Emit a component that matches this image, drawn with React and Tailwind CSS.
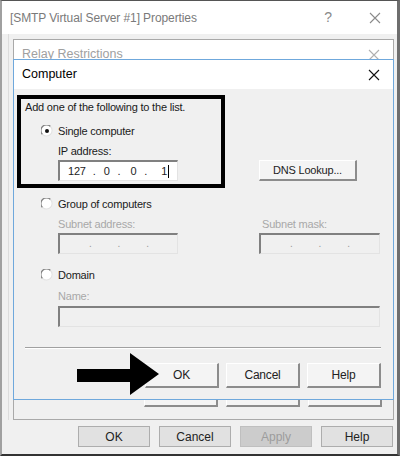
import React from 'react';

const sans = { fontFamily: '"Liberation Sans", Arial, sans-serif' };

const Radio = ({ checked }) => (
  <svg width="12" height="12" viewBox="0 0 12 12" className="shrink-0">
    <circle cx="6" cy="6" r="5.5" fill="#fff" />
    <path d="M1.5 9.5 A5.5 5.5 0 0 1 9.5 1.5" stroke="#808080" strokeWidth="1.2" fill="none" />
    <path d="M9.5 1.5 A5.5 5.5 0 0 1 1.5 9.5" stroke="#e3e3e3" strokeWidth="1.2" fill="none" />
    {checked && <circle cx="6" cy="6" r="2" fill="#111" />}
  </svg>
);

const XIcon = ({ color = '#222' }) => (
  <svg width="12" height="12" viewBox="0 0 12 12">
    <path d="M1 1 L11 11 M11 1 L1 11" stroke={color} strokeWidth="1.1" />
  </svg>
);

const Field = ({ className = '', children, white }) => (
  <div
    className={`h-[21px] border-t-2 border-l-2 border-b border-r border-t-[#808080] border-l-[#808080] border-b-[#e3e3e3] border-r-[#e3e3e3] ${white ? 'bg-white' : 'bg-[#f0f0f0]'} ${className}`}
  >
    {children}
  </div>
);

const ClassicBtn = ({ children, className = '' }) => (
  <div
    className={`flex items-center justify-center h-[25px] w-[74px] bg-[#f4f4f4] border-t border-l border-t-white border-l-white border-b-2 border-r-2 border-b-[#8c8c8c] border-r-[#8c8c8c] text-[12px] text-[#222] ${className}`}
  >
    {children}
  </div>
);

const Dots = () => (
  <div className="flex items-center h-full pl-[29px] gap-[26px] text-[10px] text-[#9a9a9a]">
    <span>.</span><span>.</span><span>.</span>
  </div>
);

export default function App() {
  return (
    <div className="relative w-[400px] h-[456px] overflow-hidden bg-[#f0f0f0]" style={sans}>
      {/* outer window */}
      <div className="absolute inset-0 border-l-2 border-r-[3px] border-t border-b-2 border-l-[#a0a0a0] border-r-[#6e6e6e] border-t-[#555] border-b-[#333]">
        <div className="h-[33px] bg-white flex items-center pl-[8px] text-[12px] tracking-[-0.1px] text-[#7a7a7a]">
          <span className="flex-1">[SMTP Virtual Server #1] Properties</span>
          <span className="w-[46px] text-center text-[14px] text-[#8a8a8a]">?</span>
          <span className="w-[46px] flex justify-center pl-[2px]"><XIcon color="#8a8a8a" /></span>
        </div>
        <div className="absolute left-[6px] top-[33px] bottom-[34px] w-px bg-[#dcdcdc]" />
        <div className="absolute right-[0px] bottom-[7px] flex gap-[9px] pr-[4px]">
          {['OK', 'Cancel'].map((t) => (
            <div key={t} className="w-[72px] h-[21px] bg-[#e1e1e1] border border-[#adadad] flex items-center justify-center text-[12px] text-[#222]">{t}</div>
          ))}
          <div className="w-[72px] h-[21px] bg-[#cccccc] border border-[#bfbfbf] flex items-center justify-center text-[12px] text-[#9c9c9c]">Apply</div>
          <div className="w-[72px] h-[21px] bg-[#e1e1e1] border border-[#adadad] flex items-center justify-center text-[12px] text-[#222]">Help</div>
        </div>
      </div>

      {/* relay restrictions window (behind) */}
      <div className="absolute left-[13px] top-[39px] w-[381px] h-[381px] border border-[#a9a9a9] bg-[#f0f0f0]">
        <div className="h-[29px] bg-white flex items-center pl-[8px] text-[12.5px] text-[#a0a0a0]">
          <span className="flex-1">Relay Restrictions</span>
          <span className="w-[38px] flex justify-center"><XIcon color="#b0b0b0" /></span>
        </div>
        <div className="absolute right-[11px] bottom-[12px] flex gap-[8px]">
          <ClassicBtn />
          <ClassicBtn />
          <ClassicBtn />
        </div>
      </div>

      {/* computer dialog */}
      <div className="absolute left-[13px] top-[59px] w-[381px] h-[341px] border border-[#6fa8dc] bg-[#f0f0f0] flex flex-col">
        <div className="h-[29px] shrink-0 bg-white flex items-center pl-[8px] text-[12.5px] text-black">
          <span className="flex-1">Computer</span>
          <span className="w-[38px] flex justify-center"><XIcon color="#111" /></span>
        </div>
        <div className="flex-1 flex flex-col pl-[11px] pr-[12px] pt-[11px] text-[11px] leading-[14px] text-[#1a1a1a] tracking-[-0.2px]">
          <div className="h-[14px]">Add one of the following to the list.</div>

          <div className="flex items-center gap-[5px] mt-[10px] pl-[16px] h-[14px]">
            <Radio checked />
            <span>Single computer</span>
          </div>
          <div className="pl-[33px] mt-[6px] h-[14px]">IP address:</div>
          <div className="flex items-center pl-[33px] mt-[2px]">
            <Field white className="w-[120px]">
              <div className="flex items-center h-full pl-[8px] text-[11px] text-[#222]">
                <span>127</span>
                <span className="ml-[7px]">.</span>
                <span className="ml-[8px]">0</span>
                <span className="ml-[8px]">.</span>
                <span className="ml-[10px]">0</span>
                <span className="ml-[8px]">.</span>
                <span className="ml-[14px]">1</span>
                <span className="inline-block w-px h-[13px] bg-black ml-[1px]" />
              </div>
            </Field>
            <div className="ml-[81px] w-[98px] h-[21px] bg-[#f4f4f4] border-t border-l border-t-white border-l-white border-b-2 border-r-2 border-b-[#8c8c8c] border-r-[#8c8c8c] flex items-center justify-center text-[11px] text-[#222]">
              DNS Lookup...
            </div>
          </div>

          <div className="flex items-center gap-[5px] mt-[16px] pl-[16px] h-[14px]">
            <Radio />
            <span>Group of computers</span>
          </div>
          <div className="flex pl-[33px] mt-[6px] h-[14px] text-[#a8a8a8]">
            <span className="w-[204px]">Subnet address:</span>
            <span>Subnet mask:</span>
          </div>
          <div className="flex pl-[33px] mt-[2px] gap-[81px]">
            <Field className="w-[120px]"><Dots /></Field>
            <Field className="w-[121px]"><Dots /></Field>
          </div>

          <div className="flex items-center gap-[5px] mt-[14px] pl-[16px] h-[14px]">
            <Radio />
            <span>Domain</span>
          </div>
          <div className="pl-[33px] mt-[7px] h-[14px] text-[#a8a8a8]">Name:</div>
          <div className="pl-[33px] mt-[3px]">
            <Field className="w-[322px]" />
          </div>

          <div className="h-[2px] mt-[20px] border-t border-t-[#a0a0a0] border-b border-b-white" />

          <div className="flex justify-end gap-[7px] mt-[14px]">
            <ClassicBtn>OK</ClassicBtn>
            <ClassicBtn>Cancel</ClassicBtn>
            <ClassicBtn>Help</ClassicBtn>
          </div>
        </div>
      </div>

      {/* annotation box */}
      <div className="absolute left-[17px] top-[95px] w-[208px] h-[93px] border-[4px] border-black" />

      {/* annotation arrow */}
      <svg className="absolute left-[76px] top-[352px]" width="86" height="46" viewBox="0 0 86 46">
        <path d="M1 17 H54 V1 L83 22 L54 43 V30 H1 Z" fill="#000" />
      </svg>
    </div>
  );
}
